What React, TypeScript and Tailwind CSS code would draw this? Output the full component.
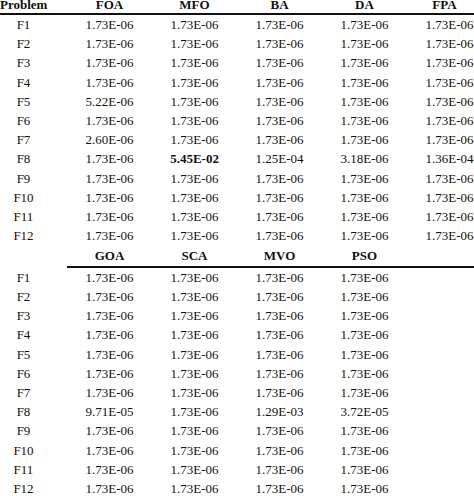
import React from "react";

const A = "1.73E-06";

type Cell = { v: string; b?: boolean };

const block1: Cell[][] = Array.from({ length: 12 }, (_, i) => {
  if (i === 4) return [{ v: "5.22E-06" }, { v: A }, { v: A }, { v: A }, { v: A }];
  if (i === 6) return [{ v: "2.60E-06" }, { v: A }, { v: A }, { v: A }, { v: A }];
  if (i === 7)
    return [{ v: A }, { v: "5.45E-02", b: true }, { v: "1.25E-04" }, { v: "3.18E-06" }, { v: "1.36E-04" }];
  return [{ v: A }, { v: A }, { v: A }, { v: A }, { v: A }];
});

const block2: Cell[][] = Array.from({ length: 12 }, (_, i) => {
  if (i === 7) return [{ v: "9.71E-05" }, { v: A }, { v: "1.29E-03" }, { v: "3.72E-05" }, { v: "" }];
  return [{ v: A }, { v: A }, { v: A }, { v: A }, { v: "" }];
});

function Rows({ data }: { data: Cell[][] }) {
  return (
    <>
      {data.map((row, i) => (
        <div key={i} className="flex h-[19.2px] leading-[19.2px]">
          <div className="w-[67px] shrink-0 pr-[20px] text-center">F{i + 1}</div>
          {row.map((c, j) => (
            <div
              key={j}
              className={`w-[85px] shrink-0 text-center whitespace-nowrap ${c.b ? "font-bold" : ""}`}
            >
              {c.v}
            </div>
          ))}
        </div>
      ))}
    </>
  );
}

export default function App() {
  return (
    <div
      className="w-[474px] h-[496px] overflow-hidden bg-white text-[13px] text-[#111]"
      style={{ fontFamily: '"Liberation Serif", "Times New Roman", serif' }}
    >
      <div className="w-[492px]">
        <div className="flex h-[15px] leading-[9px] font-bold border-b-2 border-[#111]">
          <div className="w-[67px] shrink-0 pr-[20px] text-center">Problem</div>
          <div className="w-[85px] shrink-0 text-center">FOA</div>
          <div className="w-[85px] shrink-0 text-center">MFO</div>
          <div className="w-[85px] shrink-0 text-center">BA</div>
          <div className="w-[85px] shrink-0 text-center">DA</div>
          <div className="w-[85px] shrink-0 pr-[10px] text-center">FPA</div>
        </div>
        <Rows data={block1} />
        <div className="flex h-[22.6px] leading-[21.8px] font-bold">
          <div className="w-[67px] shrink-0" />
          <div className="flex flex-1 border-b-2 border-[#111]">
            <div className="w-[85px] shrink-0 text-center">GOA</div>
            <div className="w-[85px] shrink-0 text-center">SCA</div>
            <div className="w-[85px] shrink-0 text-center">MVO</div>
            <div className="w-[85px] shrink-0 text-center">PSO</div>
          </div>
        </div>
        <Rows data={block2} />
      </div>
    </div>
  );
}
